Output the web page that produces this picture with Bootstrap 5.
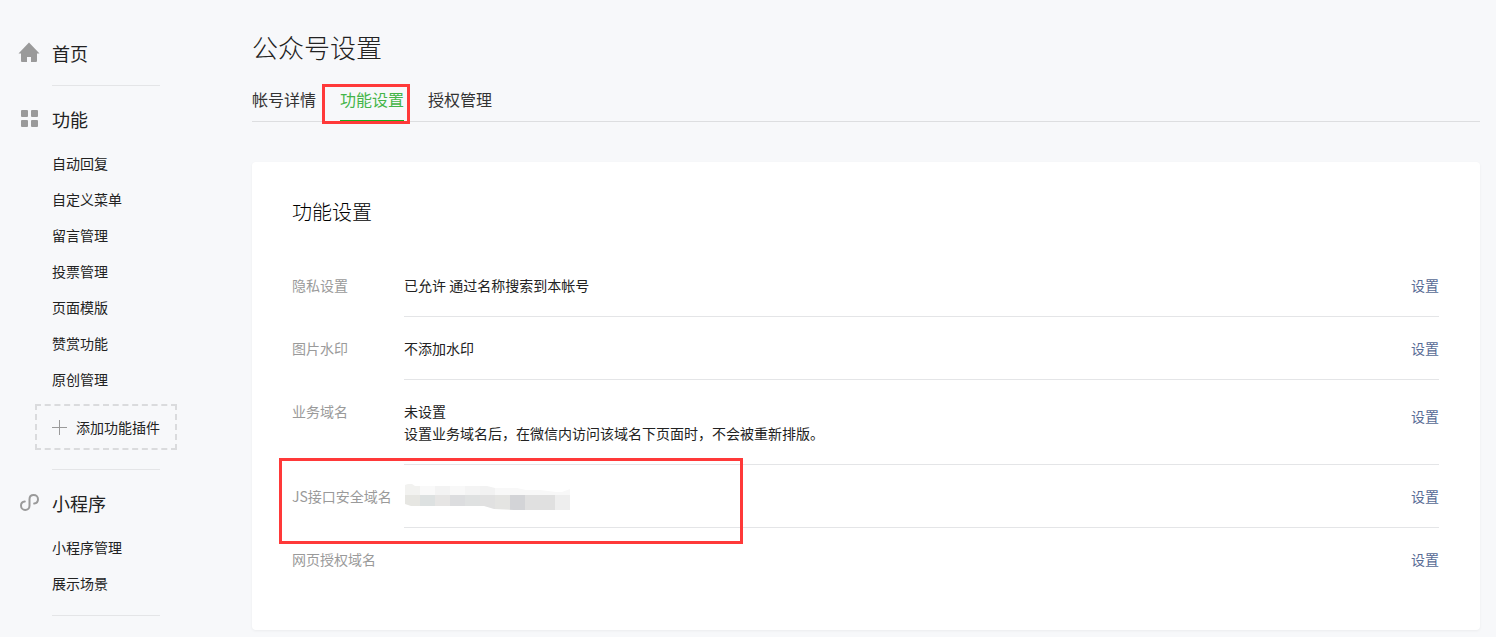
<!DOCTYPE html>
<html lang="zh-CN">
<head>
<meta charset="utf-8">
<meta name="viewport" content="width=device-width, initial-scale=1">
<title>公众号设置</title>
<link href="https://cdn.jsdelivr.net/npm/bootstrap@5.3.0/dist/css/bootstrap.min.css" rel="stylesheet">
<style>
  body { background: #f7f8fa; color: #222; font: 400 14px/22px "Noto Sans CJK SC", sans-serif; }
  a { text-decoration: none; }

  /* sidebar */
  .side { width: 252px; padding: 35px 0 0 20px; }
  .side a { color: #222; }
  .side-section { width: 140px; padding-bottom: 14px; }
  .side-rule + .side-section { padding-top: 15px; }
  .side-head { font-size: 18px; line-height: 36px; }
  .side-head svg { width: 20px; height: 22px; overflow: visible; margin-right: 12px; fill: #9a9a9a; }
  .side-list { margin-top: 8px; }
  .side-list a { line-height: 36px; }
  .side-rule { width: 108px; height: 1px; margin-left: 32px; background: #e4e5e7; }
  .side-section.has-plugin { padding-bottom: 19px; }
  .plugin-btn { width: 142px; height: 46px; margin: 7px 0 0 15px; padding: 0 0 0 15px; background: none; border: 2px dashed #dadbdd; color: #222; }
  .plugin-btn svg { width: 15px; height: 15px; margin-right: 9px; stroke: #9a9a9a; }

  /* header */
  .page-main { padding: 29px 16px 7px 0; }
  .page-title { font-size: 26px; line-height: 36px; font-weight: 300; color: #222; }
  .page-tabs { margin-top: 19px; gap: 24px; border-bottom: 1px solid #dddee0; font-size: 16px; }
  .page-tabs a { display: block; height: 37px; line-height: 30px; color: #333; }
  .page-tabs a.active { color: #44b549; margin-bottom: -1px; height: 38px; border-bottom: 2px solid #1aad19; }
  .callout-frame { border: 3px solid #ff3939; pointer-events: none; }
  .frame-tab { left: -18px; right: -6px; top: 0; height: 40px; }
  .frame-row { left: -13px; top: -7px; width: 464px; height: 86px; }

  /* settings panel */
  .panel { margin-top: 40px; padding: 35px 41px 40px 40px; background: #fff; border-radius: 4px; box-shadow: 0 1px 3px rgba(0, 0, 0, .05); }
  .panel-title { font-size: 20px; line-height: 30px; margin-bottom: 27px; font-weight: 300; color: #000; }
  .settings th { width: 112px; font-weight: 400; color: #9a9a9a; white-space: nowrap; }
  .settings th, .settings td { padding: 20px 0; vertical-align: top; }
  .settings td { border-bottom: 1px solid #e4e5e7; }
  .settings tr:last-child td { border-bottom: 0; }
  .settings td:last-child { width: 60px; text-align: right; vertical-align: middle; }
  .settings .two-line td:last-child { padding: 15px 0 27px; }
  .settings a { color: #576b95; }
  .mosaic { height: 22px; width: 166px; overflow: visible; }
</style>
</head>
<body>
<div class="d-flex">
  <nav class="side flex-shrink-0" aria-label="主导航">
    <section class="side-section">
      <a href="#" class="side-head d-flex align-items-center">
        <svg viewBox="0 0 20 22" aria-hidden="true"><path d="M9 0.500L19.500 11.500H17V19Q17 20 16 20H11V15H7V20H2Q1 20 1 19V11.500H-1.500Z"/></svg>首页</a>
    </section>
    <div class="side-rule"></div>
    <section class="side-section has-plugin">
      <a href="#" class="side-head d-flex align-items-center">
        <svg viewBox="0 0 20 22" aria-hidden="true"><rect x="1" y="2" width="7" height="7" rx="1"/><rect x="11" y="2" width="7" height="7" rx="1"/><rect x="1" y="12" width="7" height="7" rx="1"/><rect x="11" y="12" width="7" height="7" rx="1"/></svg>功能</a>
      <ul class="side-list list-unstyled mb-0">
        <li><a href="#" class="d-block ps-4 ms-2">自动回复</a></li>
        <li><a href="#" class="d-block ps-4 ms-2">自定义菜单</a></li>
        <li><a href="#" class="d-block ps-4 ms-2">留言管理</a></li>
        <li><a href="#" class="d-block ps-4 ms-2">投票管理</a></li>
        <li><a href="#" class="d-block ps-4 ms-2">页面模版</a></li>
        <li><a href="#" class="d-block ps-4 ms-2">赞赏功能</a></li>
        <li><a href="#" class="d-block ps-4 ms-2">原创管理</a></li>
      </ul>
      <button type="button" class="plugin-btn d-flex align-items-center">
        <svg viewBox="0 0 15 15" aria-hidden="true"><path d="M0 7.500H15M7.500 0V15"/></svg>添加功能插件</button>
    </section>
    <div class="side-rule"></div>
    <section class="side-section">
      <a href="#" class="side-head d-flex align-items-center">
        <svg viewBox="0 0 20 22" aria-hidden="true"><path d="M4.800 9.500C2.500 9.700 1 11.200 1 13.500C1 16 2.900 18 5.200 18C7.600 18 9.500 16.300 9.500 13.800V7.200C9.500 4.700 11.300 3 13.700 3C16.200 3 18 4.800 18 7.200C18 9.600 16.500 11.200 14.200 11.500" fill="none" stroke="#9a9a9a" stroke-width="2" stroke-linecap="round"/></svg>小程序</a>
      <ul class="side-list list-unstyled mb-0">
        <li><a href="#" class="d-block ps-4 ms-2">小程序管理</a></li>
        <li><a href="#" class="d-block ps-4 ms-2">展示场景</a></li>
      </ul>
    </section>
    <div class="side-rule"></div>
  </nav>

  <main class="page-main flex-grow-1">
    <h1 class="page-title mb-0">公众号设置</h1>
    <nav class="page-tabs d-flex" aria-label="设置分类">
      <a href="#">帐号详情</a>
      <a href="#" class="active position-relative" aria-current="page">功能设置<span class="callout-frame frame-tab position-absolute"></span></a>
      <a href="#">授权管理</a>
    </nav>

    <section class="panel">
      <h2 class="panel-title">功能设置</h2>
      <table class="settings w-100">
        <tbody>
          <tr>
            <th scope="row">隐私设置</th>
            <td>已允许 通过名称搜索到本帐号</td>
            <td><a href="#">设置</a></td>
          </tr>
          <tr>
            <th scope="row">图片水印</th>
            <td>不添加水印</td>
            <td><a href="#">设置</a></td>
          </tr>
          <tr class="two-line">
            <th scope="row">业务域名</th>
            <td>未设置<br>设置业务域名后，在微信内访问该域名下页面时，不会被重新排版。</td>
            <td><a href="#">设置</a></td>
          </tr>
          <tr>
            <th scope="row" class="position-relative">JS接口安全域名<span class="callout-frame frame-row position-absolute"></span></th>
            <td>
              <svg class="mosaic d-block" viewBox="0 0 166 22" role="img" aria-label="已隐藏的域名" shape-rendering="crispEdges">
                <defs><clipPath id="smear"><path d="M1 0L4-1H8L11 1H83L91 3H113L122 5H136L152 7H158L166 4V25H110L90 24L80 21H7L1 19Z"/></clipPath></defs>
                <g clip-path="url(#smear)">
                  <rect x="1" y="-1" width="15" height="11" fill="#f2f2f0"/>
                  <rect x="16" y="-1" width="15" height="11" fill="#f9f9f9"/>
                  <rect x="31" y="-1" width="15" height="11" fill="#f3f3f3"/>
                  <rect x="46" y="-1" width="15" height="11" fill="#f8f8f8"/>
                  <rect x="61" y="-1" width="15" height="11" fill="#f4f4f4"/>
                  <rect x="76" y="-1" width="15" height="11" fill="#f2f2f2"/>
                  <rect x="91" y="-1" width="75" height="11" fill="#f8f8f8"/>
                  <rect x="1" y="10" width="15" height="15" fill="#e6e6e2"/>
                  <rect x="16" y="10" width="15" height="15" fill="#dde1e1"/>
                  <rect x="31" y="10" width="15" height="15" fill="#e6e5e4"/>
                  <rect x="46" y="10" width="15" height="15" fill="#dcdddf"/>
                  <rect x="61" y="10" width="15" height="15" fill="#dfe1e1"/>
                  <rect x="76" y="10" width="15" height="15" fill="#e1e1e1"/>
                  <rect x="91" y="10" width="15" height="15" fill="#e4e4e2"/>
                  <rect x="106" y="10" width="15" height="15" fill="#d3d4d7"/>
                  <rect x="121" y="10" width="30" height="15" fill="#e0e0e0"/>
                  <rect x="151" y="10" width="15" height="15" fill="#eee"/>
                </g>
              </svg>
            </td>
            <td><a href="#">设置</a></td>
          </tr>
          <tr>
            <th scope="row">网页授权域名</th>
            <td></td>
            <td><a href="#">设置</a></td>
          </tr>
        </tbody>
      </table>
    </section>
  </main>
</div>
<script src="https://cdn.jsdelivr.net/npm/bootstrap@5.3.0/dist/js/bootstrap.bundle.min.js"></script>
</body>
</html>
